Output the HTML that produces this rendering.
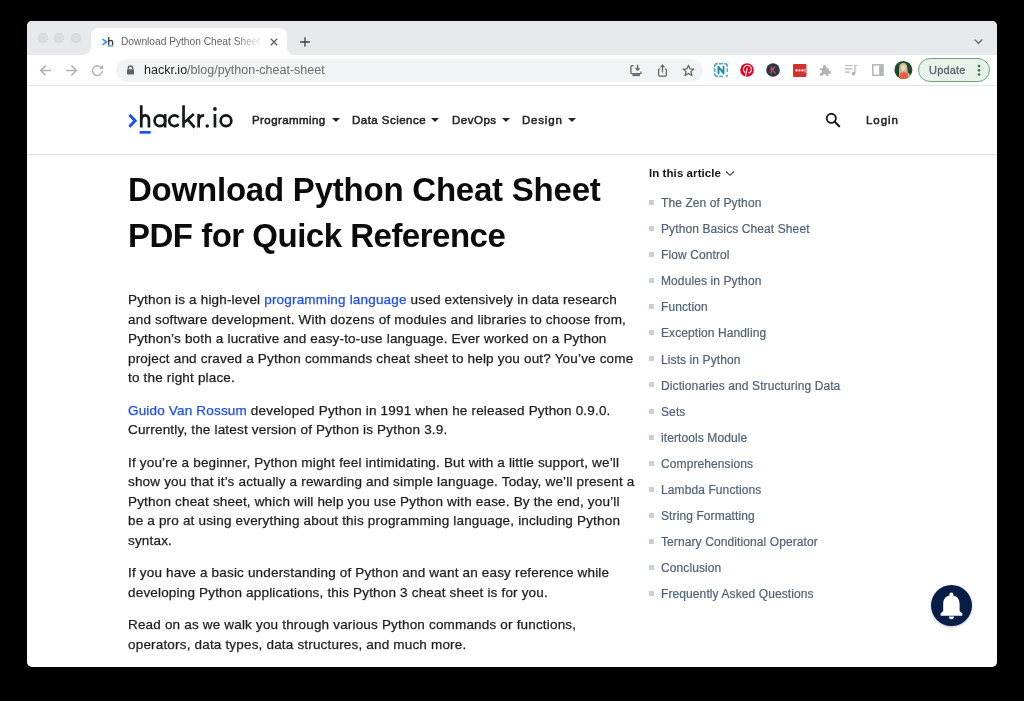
<!DOCTYPE html>
<html><head><meta charset="utf-8">
<style>
*{box-sizing:border-box;margin:0;padding:0}
.art,.toc,.h1,.nav,.toch,.tabtitle,.urltext{will-change:transform}
html,body{width:1024px;height:701px;background:#000;overflow:hidden;font-family:"Liberation Sans",sans-serif}
.a{position:absolute;white-space:nowrap}
.win{position:absolute;left:27px;top:21px;width:970px;height:646px;background:#fff;border-radius:5px;overflow:hidden}
.strip{position:absolute;left:27px;top:21px;width:970px;height:34px;background:#e8e9ec;border-radius:5px 5px 0 0}
.dot{position:absolute;top:33.3px;width:10px;height:10px;border-radius:50%;background:#dcdcdd;box-shadow:inset 0 0 0 .6px #d2d3d5}
.tab{position:absolute;left:91px;top:28px;width:196px;height:27px;background:#fff;border-radius:8px 8px 0 0}
.tab:before,.tab:after{content:"";position:absolute;bottom:0;width:8px;height:8px;background:transparent}
.tab:before{left:-8px;border-bottom-right-radius:8px;box-shadow:4px 4px 0 4px #fff}
.tab:after{right:-8px;border-bottom-left-radius:8px;box-shadow:-4px 4px 0 4px #fff}
.tabtitle{left:120.6px;top:37px;font-size:10.2px;line-height:10.2px;color:#5f6368;width:142px;overflow:hidden;
 -webkit-mask-image:linear-gradient(90deg,#000 80%,transparent 100%)}
.tbline{position:absolute;left:27px;top:85px;width:970px;height:1px;background:#e6e6e6}
.url{position:absolute;left:116px;top:58.5px;width:587px;height:23.5px;border-radius:12px;background:#f1f3f4}
.urltext{left:144px;top:64px;font-size:12.5px;line-height:12.5px;color:#6b6e72}
.hdrline{position:absolute;left:27px;top:154px;width:970px;height:1px;background:#dde3ea}
.nav{top:114.5px;font-size:11.5px;line-height:11.5px;font-weight:normal;color:#222427;letter-spacing:-0.3px;-webkit-text-stroke:.5px #222427}
.tri{position:absolute;top:117.6px;width:0;height:0;border-left:4px solid transparent;border-right:4px solid transparent;border-top:4.8px solid #222427}
.h1{left:128px;top:167px;font-size:33px;line-height:45.7px;font-weight:bold;color:#0b0b0b;letter-spacing:-0.45px}
.art{position:absolute;left:127.5px;top:290.2px;font-size:13.5px;line-height:19.5px;color:#1e1e1e;letter-spacing:0.18px;-webkit-text-stroke:.25px #1e1e1e}
.art a{-webkit-text-stroke-color:#1d4cf8}
.art p{margin-bottom:13px;white-space:nowrap}
.art a{color:#1d4cf8;text-decoration:none}
.toch{left:648.8px;top:168.4px;letter-spacing:.07px;font-size:11.5px;line-height:11.5px;font-weight:bold;color:#161616}
.toc{position:absolute;left:661px;letter-spacing:.1px;top:189.5px;list-style:none}
.toc li{position:relative;height:26.1px;line-height:26.1px;font-size:12px;color:#4f6279;white-space:nowrap;-webkit-text-stroke:.2px #4f6279}
.toc li:before{content:"";position:absolute;left:-12px;top:9.8px;width:5px;height:5px;background:#c7d1de}
.bell{position:absolute;left:931px;top:585px;width:41px;height:41px;border-radius:50%;background:#081e47;box-shadow:0 1px 3px rgba(0,0,0,.25)}
</style></head>
<body>
<div class="win"></div>
<div class="strip"></div>
<div class="dot" style="left:38px"></div>
<div class="dot" style="left:54.3px"></div>
<div class="dot" style="left:70.8px"></div>
<div class="tab"></div>
<!-- favicon -->
<svg class="a" style="left:101px;top:36px" width="14" height="12" viewBox="0 0 14 12">
  <path d="M1.5 3.2 L5.6 6 L1.5 8.8" fill="none" stroke="#3f8fdc" stroke-width="1.6"/>
  <path d="M7.7 1 V9 M7.7 5.6 Q8.6 4.3 10.1 4.4 Q11.6 4.6 11.6 6.4 V9" fill="none" stroke="#3a3a3a" stroke-width="1.3"/>
  <rect x="7" y="9.3" width="5.2" height="1.3" fill="#3f8fdc"/>
</svg>
<div class="a tabtitle">Download Python Cheat Sheet</div>
<svg class="a" style="left:269px;top:37px" width="10" height="10" viewBox="0 0 10 10"><path d="M1.8 1.8 L8.2 8.2 M8.2 1.8 L1.8 8.2" stroke="#5a5e63" stroke-width="1.25"/></svg>
<svg class="a" style="left:298.5px;top:35.5px" width="12" height="12" viewBox="0 0 12 12"><path d="M6 1.2 V10.8 M1.2 6 H10.8" stroke="#3c4043" stroke-width="1.3"/></svg>
<svg class="a" style="left:972px;top:38px" width="12" height="8" viewBox="0 0 12 8"><path d="M2.6 1.5 L6.5 5.2 L10.4 1.5" fill="none" stroke="#6b6e72" stroke-width="1.4"/></svg>

<!-- toolbar -->
<div class="tbline"></div>
<svg class="a" style="left:39px;top:64px" width="13" height="13" viewBox="0 0 13 13"><path d="M12 6.5 H2 M6.6 1.6 L1.7 6.5 L6.6 11.4" fill="none" stroke="#b1b4b8" stroke-width="1.5"/></svg>
<svg class="a" style="left:65px;top:64px" width="13" height="13" viewBox="0 0 13 13"><path d="M1 6.5 H11 M6.4 1.6 L11.3 6.5 L6.4 11.4" fill="none" stroke="#b1b4b8" stroke-width="1.5"/></svg>
<svg class="a" style="left:91px;top:64px" width="14" height="13" viewBox="0 0 14 13"><path d="M11.3 7 A4.9 4.9 0 1 1 10 3.2" fill="none" stroke="#b1b4b8" stroke-width="1.5"/><path d="M12.2 0.8 V4.9 H8.1 Z" fill="#b1b4b8"/></svg>
<div class="url"></div>
<svg class="a" style="left:126px;top:64.5px" width="9" height="10" viewBox="0 0 9 10"><path d="M2.3 4.5 V3.2 A2.2 2.2 0 0 1 6.7 3.2 V4.5" fill="none" stroke="#5f6368" stroke-width="1.3"/><rect x="1" y="4.3" width="7" height="5.3" rx=".8" fill="#5f6368"/></svg>
<div class="a urltext"><span style="color:#202124">hackr.io</span>/blog/python-cheat-sheet</div>
<!-- right icons -->
<svg class="a" style="left:629px;top:64px" width="14" height="13" viewBox="0 0 14 13"><path d="M4.6 1.7 H2.8 Q1.9 1.7 1.9 2.6 V8.6 Q1.9 9.6 2.8 9.6 H11.2 Q12.1 9.6 12.1 8.6 V7.4" fill="none" stroke="#5f6368" stroke-width="1.3"/><path d="M8.6 .8 V6.2 M6.5 4.1 L8.6 6.2 L10.7 4.1" fill="none" stroke="#5f6368" stroke-width="1.3"/><path d="M3.5 11.2 H11" stroke="#5f6368" stroke-width="1.8"/></svg>
<svg class="a" style="left:656px;top:63.5px" width="12" height="13" viewBox="0 0 12 13"><path d="M4.2 5 H3.4 Q2.6 5 2.6 5.8 V11.3 Q2.6 12.1 3.4 12.1 H9.6 Q10.4 12.1 10.4 11.3 V5.8 Q10.4 5 9.6 5 H8.8" fill="none" stroke="#5f6368" stroke-width="1.2"/><path d="M6.5 8.5 V1.6 M4.5 3.3 L6.5 1.2 L8.5 3.3" fill="none" stroke="#5f6368" stroke-width="1.2"/></svg>
<svg class="a" style="left:682px;top:63.5px" width="13" height="13" viewBox="0 0 13 13"><path d="M6.5 1.2 L8 4.8 L11.9 5.1 L8.9 7.6 L9.9 11.5 L6.5 9.4 L3.1 11.5 L4.1 7.6 L1.1 5.1 L5 4.8 Z" fill="none" stroke="#5f6368" stroke-width="1.2" stroke-linejoin="round"/></svg>
<svg class="a" style="left:713px;top:62px" width="16" height="16" viewBox="0 0 16 16"><g fill="none" stroke="#55afbf" stroke-width="1.7" stroke-linecap="round"><path d="M1.7 4.2 Q1.7 1.7 4.2 1.7"/><path d="M11.8 1.7 Q14.3 1.7 14.3 4.2"/><path d="M1.7 11.8 Q1.7 14.3 4.2 14.3"/><path d="M6.8 1.7 H9.2 M6.8 14.3 H9.2 M1.7 6.8 V9.2 M14.3 6.8 V9.2"/></g><path d="M12.2 13.9 L14.6 12.6 V15.2 Z" fill="#2e9fb2"/><path d="M5.5 11.6 V4.8 L10.5 11.4 V4.6" fill="none" stroke="#1a8ca2" stroke-width="1.9" stroke-linejoin="round" stroke-linecap="round"/></svg>
<svg class="a" style="left:740px;top:63px" width="14" height="14" viewBox="0 0 14 14"><circle cx="7" cy="7" r="6.8" fill="#e60023"/><path d="M5.2 9.6 A4 4 0 1 1 8.6 10.1" fill="none" stroke="#fff" stroke-width="1.1"/><path d="M7.3 4.9 L5.4 13.3" stroke="#fff" stroke-width="1.2"/></svg>
<svg class="a" style="left:766px;top:63px" width="14" height="14" viewBox="0 0 14 14"><circle cx="7" cy="7" r="6.8" fill="#2b3544"/><path d="M5.2 3.5 V10.5 M9.2 3.5 L5.4 7.3 M6.6 6.2 L9.4 10.5" fill="none" stroke="#d9534f" stroke-width="1.3"/></svg>
<svg class="a" style="left:793px;top:63.5px" width="14" height="13" viewBox="0 0 14 13"><rect x="0" y="0" width="13.5" height="13" rx="1" fill="#d62d2d"/><rect x="2.5" y="5.4" width="2" height="2" fill="#fff"/><rect x="5.5" y="5.4" width="2" height="2" fill="#fff"/><rect x="8.5" y="5.4" width="2" height="2" fill="#fff"/><path d="M12 4.5 V8.5" stroke="#fff" stroke-width=".8"/></svg>
<svg class="a" style="left:819px;top:64px" width="13" height="13" viewBox="0 0 13 13"><path d="M1 4.3 H3.9 Q3.7 1 5.6 1 Q7.5 1 7.3 4.3 H9.6 V6.7 Q12.3 6.5 12.3 8.2 Q12.3 9.9 9.6 9.7 V11.8 H7 Q7.1 9.9 5.4 9.9 Q3.7 9.9 3.8 11.8 H1 V8.9 Q3 9.1 3 7.4 Q3 5.7 1 5.9 Z" fill="#b0b3b7"/></svg>
<svg class="a" style="left:844px;top:64px" width="14" height="13" viewBox="0 0 14 13"><path d="M1 1.5 H8.6 M1 4.8 H8.6 M1 8.1 H6" stroke="#b4b7ba" stroke-width="1.2"/><path d="M11 1.5 V9.6 M10.5 1.5 H13.2" stroke="#b4b7ba" stroke-width="1.2"/><circle cx="9.5" cy="9.7" r="1.9" fill="#b4b7ba"/></svg>
<svg class="a" style="left:871.5px;top:64px" width="12" height="12" viewBox="0 0 12 12"><rect x=".8" y=".8" width="10.2" height="10.6" fill="none" stroke="#b4b7ba" stroke-width="1.5"/><rect x="7.2" y="1" width="3.9" height="10.3" fill="#b4b7ba"/></svg>
<svg class="a" style="left:890px;top:58px;will-change:transform" width="26" height="24" viewBox="0 0 26 24"><defs><clipPath id="av"><circle cx="13.4" cy="11.9" r="9"/></clipPath></defs><g clip-path="url(#av)"><rect width="26" height="24" fill="#1a4a2c"/><path d="M6 6 L9 4 L14 12 Z" fill="#2a6a3c" opacity=".6"/><path d="M9.2 19 Q8.6 9 10 6.5 Q12.5 3.8 15.5 5.5 Q17.8 7.5 17.6 13 L18 19 Z" fill="#cdb48e"/><ellipse cx="13.3" cy="9.6" rx="2.4" ry="3.1" fill="#ecd2bf"/><path d="M9.6 22 Q9.8 15.5 11.5 14.6 H16.2 Q18 15.5 18.4 22 Z" fill="#f2573b"/><path d="M17.8 14.5 Q19.8 15.5 20.4 20 L18.6 20 Z" fill="#e9cdb8"/></g></svg>
<div class="a" style="left:918px;top:58.3px;width:72px;height:23.8px;border-radius:12px;border:1.8px solid #6aa677;background:#e9f1eb"></div>
<div class="a" style="left:928.7px;top:64.8px;font-size:11px;line-height:11px;letter-spacing:.2px;color:#5f6368;-webkit-text-stroke:.3px #5f6368;will-change:transform">Update</div>
<svg class="a" style="left:976px;top:62px" width="6" height="16" viewBox="0 0 6 16"><circle cx="3" cy="4.1" r="1.35" fill="#2e7d44"/><circle cx="3" cy="8.3" r="1.35" fill="#2e7d44"/><circle cx="3" cy="12.5" r="1.35" fill="#2e7d44"/></svg>

<!-- site header -->
<div class="hdrline"></div>
<svg class="a" style="left:120px;top:100px" width="120" height="40" viewBox="120 100 120 40"><g fill="none" stroke="#16181d" stroke-width="2.7">
<path d="M141.25 127.5 V105.3 M141.25 121 Q141.25 115.35 145.1 115.35 Q148.95 115.35 148.95 120.5 V127.5"/>
<circle cx="159.9" cy="120.75" r="5.35"/><path d="M165.1 114 V127.5"/>
<path d="M178.6 117.3 A5.35 5.35 0 1 0 178.6 124.2"/>
<path d="M183.55 127.5 V105.3 M193.8 114 L184.6 122.3 M187.6 119.3 L194.6 127.5"/>
<path d="M198.65 127.5 V114 M198.65 120.5 Q198.9 115.35 204.2 115.35"/>
<path d="M214.95 127.5 V114"/><circle cx="226" cy="120.75" r="5.35"/>
</g><circle cx="207.2" cy="126" r="1.75" fill="#16181d"/><circle cx="214.95" cy="109" r="1.9" fill="#16181d"/>
<path d="M129.4 114.9 L135.1 120.8 L129.4 126.7" fill="none" stroke="#1a52f5" stroke-width="3"/>
<rect x="139.6" y="131" width="11.1" height="2.7" fill="#1a52f5"/></svg>
<div class="a nav" style="left:251.7px;letter-spacing:0.42px">Programming</div><div class="tri" style="left:332.2px"></div>
<div class="a nav" style="left:352.4px;letter-spacing:0.47px">Data Science</div><div class="tri" style="left:431.2px"></div>
<div class="a nav" style="left:451.7px;letter-spacing:0.5px">DevOps</div><div class="tri" style="left:502.2px"></div>
<div class="a nav" style="left:522.4px;letter-spacing:0.8px">Design</div><div class="tri" style="left:568.2px"></div>
<svg class="a" style="left:825px;top:112px" width="16" height="16" viewBox="0 0 16 16"><circle cx="6.3" cy="6.3" r="4.6" fill="none" stroke="#1b1d22" stroke-width="1.9"/><path d="M9.7 9.7 L14.2 14.2" stroke="#1b1d22" stroke-width="2.2" stroke-linecap="round"/></svg>
<div class="a nav" style="left:866px;top:115px;letter-spacing:0.95px">Login</div>

<!-- article -->
<div class="a h1" style="letter-spacing:-0.22px">Download Python Cheat Sheet</div><div class="a h1" style="top:212.7px;letter-spacing:-0.5px">PDF for Quick Reference</div>
<div class="art">
  <p>Python is a high-level <a>programming language</a> used extensively in data research<br>and software development. With dozens of modules and libraries to choose from,<br>Python’s both a lucrative and easy-to-use language. Ever worked on a Python<br>project and craved a Python commands cheat sheet to help you out? You’ve come<br>to the right place.</p>
  <p><a>Guido Van Rossum</a> developed Python in 1991 when he released Python 0.9.0.<br>Currently, the latest version of Python is Python 3.9.</p>
  <p>If you’re a beginner, Python might feel intimidating. But with a little support, we’ll<br>show you that it’s actually a rewarding and simple language. Today, we’ll present a<br>Python cheat sheet, which will help you use Python with ease. By the end, you’ll<br>be a pro at using everything about this programming language, including Python<br>syntax.</p>
  <p>If you have a basic understanding of Python and want an easy reference while<br>developing Python applications, this Python 3 cheat sheet is for you.</p>
  <p>Read on as we walk you through various Python commands or functions,<br>operators, data types, data structures, and much more.</p>
</div>

<!-- toc -->
<div class="a toch">In this article</div>
<svg class="a" style="left:725px;top:169.5px" width="10" height="7" viewBox="0 0 10 7"><path d="M1 1.5 L5 5.3 L9 1.5" fill="none" stroke="#3a3a3a" stroke-width="1.05"/></svg>
<ul class="toc">
  <li>The Zen of Python</li>
  <li>Python Basics Cheat Sheet</li>
  <li>Flow Control</li>
  <li>Modules in Python</li>
  <li>Function</li>
  <li>Exception Handling</li>
  <li>Lists in Python</li>
  <li>Dictionaries and Structuring Data</li>
  <li>Sets</li>
  <li>itertools Module</li>
  <li>Comprehensions</li>
  <li>Lambda Functions</li>
  <li>String Formatting</li>
  <li>Ternary Conditional Operator</li>
  <li>Conclusion</li>
  <li>Frequently Asked Questions</li>
</ul>
<div class="bell"></div>
<svg class="a" style="left:926px;top:580px" width="50" height="50" viewBox="0 0 50 50"><rect x="23.4" y="12.6" width="4" height="4.5" rx="2" fill="#fff"/><path d="M25.4 15.3 C20 15.3 17.2 19.2 17.2 24 V30.3 C17.2 31.8 15.6 32.6 14.6 33.2 V35.7 H36.3 V33.2 C35.3 32.6 33.6 31.8 33.6 30.3 V24 C33.6 19.2 30.8 15.3 25.4 15.3 Z" fill="#fff"/><path d="M22.9 36.5 H27.9 A2.5 2.7 0 0 1 22.9 36.5 Z" fill="#fff"/></svg>
</body></html>
